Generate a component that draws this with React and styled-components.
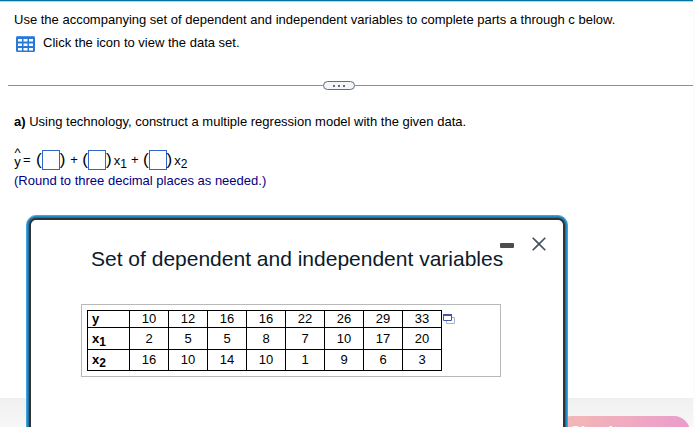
import React, { useState } from "react";
import styled, { createGlobalStyle } from "styled-components";

const GlobalStyle = createGlobalStyle`
  * {
    box-sizing: border-box;
  }

  body {
    margin: 0;
    background-color: #fcfcfc;
    color: #000;
    font-family: "Liberation Sans", Arial, sans-serif;
    font-size: 13px;
    line-height: 16px;
  }
`;

const Page = styled.div`
  display: flex;
  flex-direction: column;
  height: 100vh;
  margin-right: 2px;
  overflow: hidden;
  background-color: #fff;
  border-top: 1px solid #00749e;
  box-shadow: inset 0 1px 0 #b5d6e2;
`;

const Question = styled.main`
  flex: 1;
`;

const Intro = styled.div`
  padding: 11px 14px 0;
`;

const Text = styled.p`
  margin: 0;
`;

const DataLink = styled.a`
  display: flex;
  align-items: flex-start;
  gap: 8px;
  margin-top: 7px;
  padding-left: 2px;
  color: inherit;
  text-decoration: none;

  svg {
    margin-top: 1px;
  }
`;

const Divider = styled.div`
  display: flex;
  align-items: center;
  height: 9px;
  margin: 29px 0 0 8px;

  &::before,
  &::after {
    content: "";
    height: 1px;
    background-color: #8491a3;
  }

  &::before {
    flex: 315;
  }

  &::after {
    flex: 338;
  }
`;

const Expand = styled.button`
  display: flex;
  justify-content: center;
  align-items: center;
  gap: 3px;
  width: 32px;
  height: 9px;
  padding: 0;
  border: 1px solid #5f6d7d;
  border-radius: 5px;
  background-color: #f3f5f8;
  cursor: pointer;
`;

const Dot = styled.span`
  width: 2px;
  height: 2px;
  background-color: #5f6d7d;
`;

const Part = styled.section`
  padding: 24px 14px 0;
`;

const Equation = styled.div`
  display: flex;
  align-items: center;
  height: 24px;
  margin-top: 18px;
`;

const YHat = styled.span`
  display: flex;
  flex-direction: column;
  align-items: center;
  width: 7px;
  height: 24px;

  span:first-child {
    height: 6px;
    line-height: 10px;
  }
`;

const Sign = styled.span`
  width: 8px;
  margin: 0 ${({ $after }) => $after}px 0 ${({ $before }) => $before}px;
`;

const Group = styled.span`
  display: flex;
  align-items: center;
  font-size: 17px;
  line-height: 20px;
`;

const Blank = styled.input`
  width: 18px;
  height: 20px;
  padding: 0;
  border: 1px solid #3366cc;
  border-radius: 0;
  background-color: #fff;
  font: inherit;
  font-size: 13px;
  text-align: center;
`;

const Variable = styled.span`
  padding: 2px 0 0 2px;
`;

const Sub = styled.sub`
  font-size: 12px;
  line-height: 0;
  vertical-align: -3px;
`;

const Note = styled.p`
  margin: 1px 0 0;
  color: #000080;
`;

const Footer = styled.footer`
  display: flex;
  justify-content: flex-end;
  height: 29px;
  padding: 18px 3px 0 0;
  background: linear-gradient(#f0f0f0, #f7f7f7);
`;

const CheckButton = styled.button`
  flex-shrink: 0;
  height: 34px;
  padding: 0 13px;
  border: none;
  border-radius: 16px;
  background: linear-gradient(90deg, #f4bab4, #eb9ccc);
  color: #fff;
  font-family: inherit;
  font-size: 16px;
  font-weight: bold;
  cursor: pointer;
`;

const Dialog = styled.div`
  position: fixed;
  top: 215px;
  right: 127px;
  bottom: -10px;
  left: 26px;
  padding: 31px 66px 0 54px;
  border: 1px solid #3ca5dd;
  border-radius: 10px;
  background-color: #fff;
  box-shadow: inset 0 0 0 1px #1b8fd0, inset 0 0 0 2px #22709c,
    inset 0 0 0 4px #333;
`;

const DialogTitle = styled.h2`
  margin: 0 0 0 10px;
  color: #0b1a2b;
  font-size: 21px;
  font-weight: normal;
  line-height: 24px;
  white-space: nowrap;
`;

const Controls = styled.div`
  position: absolute;
  top: 21px;
  right: 21px;
  display: flex;
  gap: 18px;
`;

const IconButton = styled.button`
  display: flex;
  padding: 0;
  border: none;
  background: none;
  cursor: pointer;
`;

const DataFrame = styled.div`
  display: flex;
  align-items: flex-start;
  gap: 1px;
  margin-top: 33px;
  padding: 5px;
  border: 1px solid #b8b8b8;

  button {
    margin-top: 4px;
  }
`;

const Table = styled.table`
  border-collapse: collapse;
  text-align: center;
`;

const Row = styled.tr`
  height: ${({ $height }) => $height}px;
`;

const Head = styled.th`
  width: 42px;
  padding: 0 4px;
  border: 1px solid #000;
  line-height: 16px;
  text-align: left;
`;

const Cell = styled.td`
  width: 39px;
  padding: 0;
  border: 1px solid #000;
  line-height: 16px;
`;

const rows = [
  { name: "y", height: 17, values: [10, 12, 16, 16, 22, 26, 29, 33] },
  { name: "x", sub: 1, height: 22, values: [2, 5, 5, 8, 7, 10, 17, 20] },
  { name: "x", sub: 2, height: 21, values: [16, 10, 14, 10, 1, 9, 6, 3] },
];

function GridIcon() {
  return (
    <svg width="19" height="16" viewBox="0 0 19 16" aria-hidden="true">
      <rect width="19" height="16" rx="1.5" fill="#2878d8" />
      <path d="M1 .5h17" stroke="#4f93e6" />
      {[3, 7.5, 12].map((y) =>
        [2, 7.5, 13].map((x) => (
          <rect key={`${x}-${y}`} x={x} y={y} width="4" height="2.5" fill="#fff" />
        ))
      )}
    </svg>
  );
}

function CopyIcon() {
  return (
    <svg width="12" height="10" viewBox="0 0 12 10" fill="none" aria-hidden="true">
      <path d="M3.5 3.5h8v6h-8z" fill="#fff" stroke="#a9afd8" />
      <path d="M.5 .5h8v6h-8z" fill="#fff" stroke="#4656a4" />
      <path d="M0 1h9" stroke="#4656a4" strokeWidth="2" />
    </svg>
  );
}

function Coefficient({ label, value, onChange }) {
  return (
    <Group>
      (
      <Blank
        type="text"
        aria-label={label}
        value={value}
        onChange={(event) => onChange(event.target.value)}
      />
      )
    </Group>
  );
}

function App() {
  const [coefficients, setCoefficients] = useState(["", "", ""]);

  const handleChange = (index) => (value) => {
    setCoefficients(coefficients.map((old, i) => (i === index ? value : old)));
  };

  return (
    <>
      <GlobalStyle />
      <Page>
        <Question>
          <Intro>
            <Text>
              Use the accompanying set of dependent and independent variables to
              complete parts a through c below.
            </Text>
            <DataLink href="#data">
              <GridIcon />
              Click the icon to view the data set.
            </DataLink>
          </Intro>
          <Divider>
            <Expand aria-label="Show more">
              <Dot />
              <Dot />
              <Dot />
            </Expand>
          </Divider>
          <Part>
            <Text>
              <b>a)</b> Using technology, construct a multiple regression model
              with the given data.
            </Text>
            <Equation>
              <YHat>
                <span>^</span>
                <span>y</span>
              </YHat>
              <Sign $before={2} $after={5}>=</Sign>
              <Coefficient label="Intercept" value={coefficients[0]} onChange={handleChange(0)} />
              <Sign $before={5} $after={4}>+</Sign>
              <Coefficient label="Coefficient of x1" value={coefficients[1]} onChange={handleChange(1)} />
              <Variable>
                x<Sub>1</Sub>
              </Variable>
              <Sign $before={4} $after={4}>+</Sign>
              <Coefficient label="Coefficient of x2" value={coefficients[2]} onChange={handleChange(2)} />
              <Variable>
                x<Sub>2</Sub>
              </Variable>
            </Equation>
            <Note>(Round to three decimal places as needed.)</Note>
          </Part>
        </Question>
        <Footer>
          <CheckButton type="button">Check answer</CheckButton>
        </Footer>
      </Page>

      <Dialog id="data" role="dialog" aria-labelledby="data-title">
        <DialogTitle id="data-title">
          Set of dependent and independent variables
        </DialogTitle>
        <Controls>
          <IconButton aria-label="Minimize">
            <svg width="14" height="14" viewBox="0 0 14 14">
              <rect y="6" width="14" height="5" rx="1" fill="#4d4d4d" />
            </svg>
          </IconButton>
          <IconButton aria-label="Close">
            <svg width="14" height="14" viewBox="0 0 14 14">
              <path d="M.7 .7l12.6 12.6M13.3 .7L.7 13.3" stroke="#44505e" strokeWidth="1.6" />
            </svg>
          </IconButton>
        </Controls>
        <DataFrame>
          <Table>
            <tbody>
              {rows.map(({ name, sub, height, values }) => (
                <Row key={name + sub} $height={height}>
                  <Head scope="row">
                    {name}
                    {sub && <Sub>{sub}</Sub>}
                  </Head>
                  {values.map((value, i) => (
                    <Cell key={i}>{value}</Cell>
                  ))}
                </Row>
              ))}
            </tbody>
          </Table>
          <IconButton aria-label="Copy data">
            <CopyIcon />
          </IconButton>
        </DataFrame>
      </Dialog>
    </>
  );
}

export default App;
